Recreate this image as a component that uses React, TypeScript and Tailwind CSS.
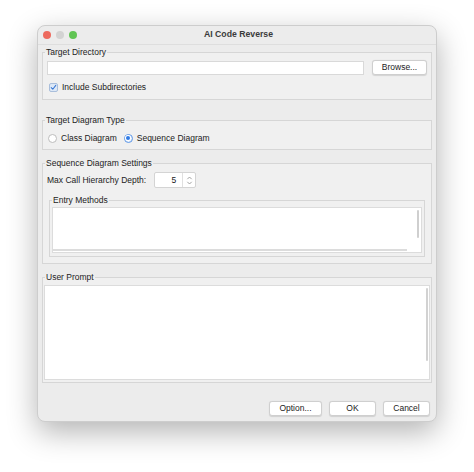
import React from "react";

const font = { fontFamily: '"Liberation Sans", Arial, sans-serif' };

function Group({
  title,
  className = "",
  bodyClassName = "",
  children,
}: {
  title: string;
  className?: string;
  bodyClassName?: string;
  children: React.ReactNode;
}) {
  return (
    <fieldset className={`border border-[#d6d6d6] bg-[#f0f0f0] ${className}`}>
      <legend className="ml-[2px] px-[1px] text-[8.5px] leading-[10px] text-[#222]">
        {title}
      </legend>
      <div className={bodyClassName}>{children}</div>
    </fieldset>
  );
}

function MacButton({ label, width }: { label: string; width: string }) {
  return (
    <button
      className={`${width} h-[15px] rounded-[3px] border border-[#cfcfcf] bg-white text-[8.5px] leading-[13px] text-[#222] shadow-[0_0.5px_1px_rgba(0,0,0,0.12)]`}
    >
      {label}
    </button>
  );
}

function Checkbox() {
  return (
    <span className="flex h-[9px] w-[9px] items-center justify-center rounded-[2px] border border-[#a9bedb] bg-[#dde8f6]">
      <svg viewBox="0 0 8 8" className="h-[7px] w-[7px]">
        <path d="M1.4 4.2 L3.2 6 L6.6 1.6" fill="none" stroke="#3978d4" strokeWidth="1.2" strokeLinecap="round" strokeLinejoin="round" />
      </svg>
    </span>
  );
}

function Radio({ checked }: { checked?: boolean }) {
  return checked ? (
    <span className="flex h-[9px] w-[9px] items-center justify-center rounded-full border border-[#5e97e6] bg-[#e3edfb]">
      <span className="flex h-[6px] w-[6px] items-center justify-center rounded-full bg-white">
        <span className="h-[4px] w-[4px] rounded-full bg-[#2f7ae5]" />
      </span>
    </span>
  ) : (
    <span className="h-[9px] w-[9px] rounded-full border border-[#bdbdbd] bg-white" />
  );
}

function Spinner({ value }: { value: number }) {
  return (
    <div className="flex h-[16px] w-[42px] items-stretch rounded-[2px] border border-[#d4d4d4] bg-white">
      <span className="flex flex-1 items-center justify-end pr-[6px] text-[8.5px] text-[#222]">
        {value}
      </span>
      <span className="flex w-[13px] items-center justify-center border-l border-[#e0e0e0]">
        <svg viewBox="0 0 8 12" className="h-[11px] w-[7px]">
          <path d="M1.5 4.5 L4 2 L6.5 4.5" fill="none" stroke="#8a8a8a" strokeWidth="0.9" />
          <path d="M1.5 7.5 L4 10 L6.5 7.5" fill="none" stroke="#8a8a8a" strokeWidth="0.9" />
        </svg>
      </span>
    </div>
  );
}

export default function App() {
  return (
    <div className="h-[472px] w-[474px] bg-white pl-[37px] pt-[25px]" style={font}>
      <div className="flex h-[397px] w-[400px] flex-col overflow-hidden rounded-[8px] border border-[#cdcdcd] bg-[#ececec] shadow-[0_10px_30px_rgba(0,0,0,0.3)]">
        {/* Title bar */}
        <div className="relative flex h-[19px] shrink-0 items-center border-b border-[#dedede] px-[5px]">
          <div className="flex gap-[5px]">
            <span className="h-[8px] w-[8px] rounded-full bg-[#ed6a5e]" />
            <span className="h-[8px] w-[8px] rounded-full bg-[#d3d3d3]" />
            <span className="h-[8px] w-[8px] rounded-full bg-[#61c554]" />
          </div>
          <span className="flex-1 pr-[31px] text-center text-[8.7px] font-bold text-[#3a3a3a]">
            AI Code Reverse
          </span>
        </div>

        {/* Body */}
        <div className="flex flex-1 flex-col px-[4px] pb-[5px]">
          <Group title="Target Directory" className="mt-[2px]" bodyClassName="px-[4px] pb-[7px] pt-[3px]">
            <div className="flex items-center gap-[8px]">
              <div className="h-[14px] flex-1 border border-[#d9d9d9] bg-white" />
              <MacButton label="Browse..." width="w-[55px]" />
            </div>
            <div className="mt-[7px] flex items-center gap-[4px] pl-[2px]">
              <Checkbox />
              <span className="text-[8.5px] leading-[10px] text-[#222]">Include Subdirectories</span>
            </div>
          </Group>

          <Group title="Target Diagram Type" className="mt-[15px]" bodyClassName="pl-[5px] pr-[4px] pb-[6px] pt-[8px]">
            <div className="flex items-center">
              <Radio />
              <span className="ml-[4px] text-[8.5px] leading-[10px] text-[#222]">Class Diagram</span>
              <span className="ml-[7px]">
                <Radio checked />
              </span>
              <span className="ml-[4px] text-[8.5px] leading-[10px] text-[#222]">Sequence Diagram</span>
            </div>
          </Group>

          <Group title="Sequence Diagram Settings" className="mt-[8px]" bodyClassName="px-[6px] pb-[6px] pt-[4px]">
            <div className="flex items-center gap-[8px]">
              <span className="-ml-[2px] text-[8.5px] leading-[10px] text-[#222]">
                Max Call Hierarchy Depth:
              </span>
              <Spinner value={5} />
            </div>
            <Group title="Entry Methods" className="mt-[7px]" bodyClassName="px-[2px] pb-[3px] pt-[2px]">
              <div className="flex h-[46px] flex-col border border-[#dcdcdc] bg-white">
                <div className="flex flex-1">
                  <div className="flex-1" />
                  <div className="flex w-[7px] justify-center pt-[2px]">
                    <span className="h-[28px] w-[2px] rounded-full bg-[#cfcfcf]" />
                  </div>
                </div>
                <div className="flex h-[4px] items-center pr-[14px]">
                  <span className="h-[2px] flex-1 bg-[#dcdcdc]" />
                </div>
              </div>
            </Group>
          </Group>

          <Group title="User Prompt" className="mt-[8px]" bodyClassName="px-[1px] pb-[2px] pt-[3px]">
            <div className="flex h-[95px] border border-[#dcdcdc] bg-white">
              <div className="flex-1" />
              <div className="flex w-[5px] justify-center pt-[2px]">
                <span className="h-[73px] w-[2px] rounded-full bg-[#d2d2d2]" />
              </div>
            </div>
          </Group>

          <div className="mt-auto flex justify-end gap-[7px] pr-[2px]">
            <MacButton label="Option..." width="w-[53px]" />
            <MacButton label="OK" width="w-[47px]" />
            <MacButton label="Cancel" width="w-[47px]" />
          </div>
        </div>
      </div>
    </div>
  );
}
